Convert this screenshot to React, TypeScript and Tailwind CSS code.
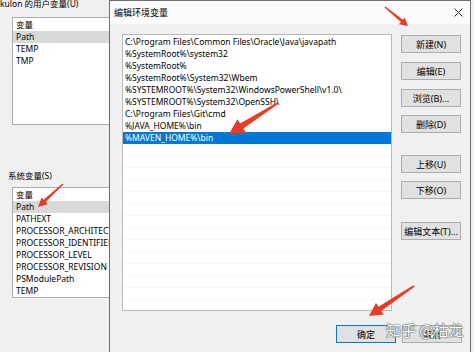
import React from 'react'

const USER_VARS = ['Path', 'TEMP', 'TMP']
const SYS_VARS = [
  'Path',
  'PATHEXT',
  'PROCESSOR_ARCHITECTURE',
  'PROCESSOR_IDENTIFIER',
  'PROCESSOR_LEVEL',
  'PROCESSOR_REVISION',
  'PSModulePath',
  'TEMP',
]

const PATHS = [
  'C:\\Program Files\\Common Files\\Oracle\\Java\\javapath',
  '%SystemRoot%\\system32',
  '%SystemRoot%',
  '%SystemRoot%\\System32\\Wbem',
  '%SYSTEMROOT%\\System32\\WindowsPowerShell\\v1.0\\',
  '%SYSTEMROOT%\\System32\\OpenSSH\\',
  'C:\\Program Files\\Git\\cmd',
  '%JAVA_HOME%\\bin',
  '%MAVEN_HOME%\\bin',
]

const SELECTED = 8

function Arrow({ x1, y1, x2, y2, head = 10, hw = 6, tail = 0.8, neck = 2 }: {
  x1: number; y1: number; x2: number; y2: number
  head?: number; hw?: number; tail?: number; neck?: number
}) {
  const dx = x2 - x1
  const dy = y2 - y1
  const L = Math.hypot(dx, dy)
  const ux = dx / L
  const uy = dy / L
  const px = -uy
  const py = ux
  const bx = x2 - ux * head
  const by = y2 - uy * head
  const pts = [
    [x1 + px * tail, y1 + py * tail],
    [bx + px * neck, by + py * neck],
    [bx + px * hw, by + py * hw],
    [x2, y2],
    [bx - px * hw, by - py * hw],
    [bx - px * neck, by - py * neck],
    [x1 - px * tail, y1 - py * tail],
  ]
  return <polygon points={pts.map((p) => p.join(',')).join(' ')} fill="#ee3a22" />
}

function Btn({ children, primary }: { children: React.ReactNode; primary?: boolean }) {
  return (
    <div
      className={`flex h-[18px] w-[60px] items-center justify-center border text-[9px] leading-none text-black ${
        primary ? 'border-[#0078d7] bg-[#e1e1e1]' : 'border-[#adadad] bg-[#e1e1e1]'
      }`}
    >
      {children}
    </div>
  )
}

function VarList({ items, height }: { items: string[]; height: number }) {
  return (
    <div className="ml-[12px] w-[120px] border border-[#adadad] bg-white pt-px" style={{ height }}>
      <div className="flex h-[12px] items-center pl-[3px] text-[8.5px] leading-none text-black">变量</div>
      {items.map((v, i) => (
        <div
          key={v}
          className={`flex h-[12px] items-center whitespace-nowrap pl-[3px] text-[8.5px] leading-none text-black ${
            i === 0 ? 'bg-[#d9d9d9]' : ''
          }`}
        >
          {v}
        </div>
      ))}
    </div>
  )
}

export default function App() {
  return (
    <div className="relative flex h-[352px] w-[474px] overflow-hidden bg-[#f0f0f0] font-['Noto_Sans','Noto_Sans_CJK_SC',sans-serif]">
      {/* background window */}
      <div className="flex w-[109px] shrink-0 flex-col overflow-hidden">
        <div className="-mt-[2px] h-[14px] whitespace-nowrap text-[8.5px] leading-[12px] text-black">kulon 的用户变量(U)</div>
        <div className="mt-[5px]">
          <VarList items={USER_VARS} height={108} />
        </div>
        <div className="mt-[45px] h-[12px] pl-[8px] text-[8.5px] leading-[12px] text-black">系统变量(S)</div>
        <div className="mt-[5px]">
          <VarList items={SYS_VARS} height={111} />
        </div>
      </div>

      {/* dialog */}
      <div className="flex w-[362px] shrink-0 flex-col border-x border-t border-[#6d6d6d] bg-[#f0f0f0]">
        <div className="flex h-[23px] items-center justify-between bg-[#fbfbfb] pl-[4px] pr-[7px]">
          <span className="text-[9px] leading-none text-black">编辑环境变量</span>
          <svg width="9" height="9" viewBox="0 0 9 9">
            <path d="M0.5 0.5 L8.5 8.5 M8.5 0.5 L0.5 8.5" stroke="#222" strokeWidth="1" />
          </svg>
        </div>

        <div className="flex pl-[12px] pt-[10px]">
          <div className="flex h-[277px] w-[270px] flex-col overflow-hidden border border-[#b9b9b9] bg-white pt-[1px]">
            {PATHS.map((p, i) => (
              <div
                key={p}
                className={`flex h-[12px] shrink-0 items-center whitespace-nowrap pl-[2px] text-[8.5px] leading-none ${
                  i === SELECTED ? 'bg-[#0078d7] text-white' : 'text-black'
                }`}
              >
                {p}
              </div>
            ))}
            {Array.from({ length: 14 }).map((_, i) => (
              <div key={i} className="h-[12px] shrink-0 border-b border-[#f6f6f6]" />
            ))}
          </div>

          <div className="ml-[9px] flex flex-col pt-px">
            <Btn>新建(N)</Btn>
            <div className="mt-[9px]"><Btn>编辑(E)</Btn></div>
            <div className="mt-[9px]"><Btn>浏览(B)...</Btn></div>
            <div className="mt-[8px]"><Btn>删除(D)</Btn></div>
            <div className="mt-[22px]"><Btn>上移(U)</Btn></div>
            <div className="mt-[8px]"><Btn>下移(O)</Btn></div>
            <div className="mt-[23px]"><Btn>编辑文本(T)...</Btn></div>
          </div>
        </div>

        <div className="mt-[14px] flex justify-end gap-[6px] pr-[8px]">
          <Btn primary>确定</Btn>
          <Btn>取消</Btn>
        </div>
      </div>

      {/* watermark */}
      <div className="absolute left-[386px] top-[320px] whitespace-nowrap font-['Noto_Sans_CJK_SC',sans-serif] text-[15px] leading-[20px] text-white [text-shadow:0_0_1px_#444,0_0_1px_#444,0_0_2px_#888]">
        知乎 @枯龙
      </div>

      {/* annotation arrows */}
      <svg className="pointer-events-none absolute left-0 top-0" width="474" height="352">
        <Arrow x1={385} y1={7} x2={408} y2={26} head={8} hw={4.5} tail={0.7} neck={1.5} />
        <Arrow x1={278} y1={103} x2={229} y2={134} head={15} hw={8} tail={1} neck={3} />
        <Arrow x1={63} y1={184} x2={38} y2={207} head={9} hw={4.5} tail={0.7} neck={1.6} />
        <Arrow x1={414} y1={286} x2={369} y2={316} head={13} hw={7} tail={1} neck={2.6} />
      </svg>
    </div>
  )
}
